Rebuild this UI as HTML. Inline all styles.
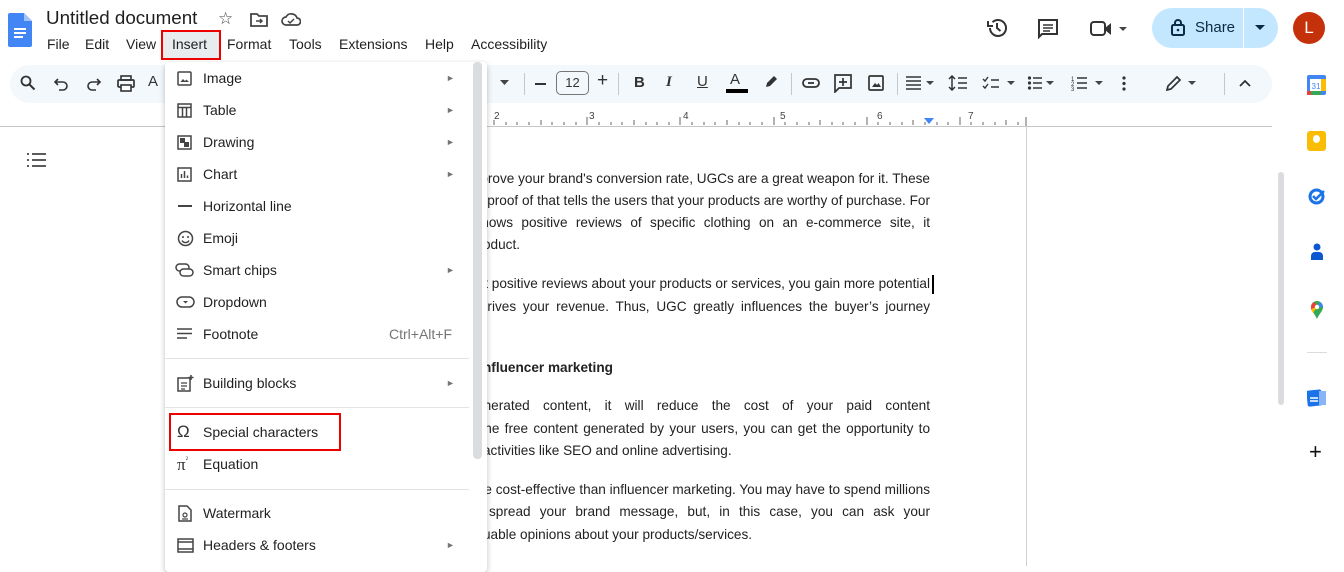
<!DOCTYPE html>
<html><head><meta charset="utf-8"><style>
*{margin:0;padding:0;box-sizing:border-box}
body{width:1344px;height:566px;overflow:hidden;background:#fff;font-family:"Liberation Sans",sans-serif;color:#1f1f1f;position:relative}
.a{position:absolute;white-space:nowrap}
.tb{position:absolute;left:10px;top:65px;width:1262px;height:38px;background:#f3f8fc;border-radius:19px}
.ln{position:absolute;font-size:13.6px;color:#222;white-space:nowrap;right:414px;text-align:right}
.ll{position:absolute;font-size:13.6px;color:#222;white-space:nowrap;left:483px}
.mi{position:absolute;left:203px;font-size:14px;color:#1f1f1f}
.ar{position:absolute;left:446px;font-size:9px;color:#777}
.ic{position:absolute;left:177px}
</style></head><body>
<svg class="a" style="left:8px;top:13px" width="24" height="34" viewBox="0 0 24 34"><path d="M2 0h14l8 8v24a2 2 0 0 1-2 2H2a2 2 0 0 1-2-2V2a2 2 0 0 1 2-2z" fill="#4285f4"/><path d="M16 0l8 8h-8z" fill="#a1c2fa"/><rect x="6" y="15" width="12" height="2" fill="#fff"/><rect x="6" y="19" width="12" height="2" fill="#fff"/><rect x="6" y="23" width="9" height="2" fill="#fff"/></svg>
<div class="a" style="left:46px;top:7px;font-size:18.8px;color:#1f1f1f">Untitled document</div>
<div class="a" style="left:218px;top:9px;font-size:17px;color:#444">☆</div>
<svg class="a" style="left:250px;top:12px" width="18" height="15"><path d="M1 2h6l2 2h8v10H1z" fill="none" stroke="#444" stroke-width="1.8"/><path d="M6 9h6M10 7l2 2-2 2" stroke="#444" stroke-width="1.5" fill="none"/></svg>
<svg class="a" style="left:281px;top:12px" width="20" height="14"><path d="M5 13a4 4 0 0 1 0-8 6 6 0 0 1 11 1 3.5 3.5 0 0 1 0 7z" fill="none" stroke="#444" stroke-width="1.7"/><path d="M7 9l2 2 4-4" stroke="#444" stroke-width="1.5" fill="none"/></svg>
<div class="a" style="top:36px;left:47px;font-size:14px">File</div>
<div class="a" style="top:36px;left:85px;font-size:14px">Edit</div>
<div class="a" style="top:36px;left:126px;font-size:14px">View</div>
<div class="a" style="top:30px;left:161px;width:60px;height:30px;border:2px solid #e00;background:#e9ecef"></div>
<div class="a" style="top:36px;left:172px;font-size:14px">Insert</div>
<div class="a" style="top:36px;left:227px;font-size:14px">Format</div>
<div class="a" style="top:36px;left:289px;font-size:14px">Tools</div>
<div class="a" style="top:36px;left:339px;font-size:14px">Extensions</div>
<div class="a" style="top:36px;left:425px;font-size:14px">Help</div>
<div class="a" style="top:36px;left:471px;font-size:14px">Accessibility</div>
<svg class="a" style="left:986px;top:17px" width="22" height="22" viewBox="0 0 22 22"><path d="M4 11a8 8 0 1 0 2.5-5.8" fill="none" stroke="#333" stroke-width="2"/><path d="M2 4v5h5" fill="none" stroke="#333" stroke-width="2"/><path d="M11 6v5l3.5 3" fill="none" stroke="#333" stroke-width="2"/></svg>
<svg class="a" style="left:1037px;top:18px" width="22" height="22"><path d="M2 2h18v14h-15l-3 3z" fill="none" stroke="#333" stroke-width="2"/><path d="M6 7h10M6 10h10M6 13h7" stroke="#333" stroke-width="1.6"/></svg>
<svg class="a" style="left:1090px;top:20px" width="40" height="18"><rect x="1" y="2" width="14" height="13" rx="3" fill="none" stroke="#333" stroke-width="2"/><path d="M15 8l6-5v12l-6-5z" fill="#333"/><path d="M29 7h8l-4 4z" fill="#444"/></svg>
<div class="a" style="left:1152px;top:8px;width:126px;height:40px;border-radius:20px;background:#c2e7ff"></div>
<div class="a" style="left:1243px;top:8px;width:1px;height:40px;background:#fff"></div>
<svg class="a" style="left:1171px;top:18px" width="14" height="18"><rect x="1" y="7" width="12" height="10" rx="1.5" fill="none" stroke="#0b2a44" stroke-width="2"/><path d="M4 7V5a3 3 0 0 1 6 0v2" fill="none" stroke="#0b2a44" stroke-width="2"/><circle cx="7" cy="12" r="1.3" fill="#0b2a44"/></svg>
<div class="a" style="left:1195px;top:19px;font-size:15px;color:#0b2a44">Share</div>
<svg class="a" style="left:1255px;top:25px" width="10" height="6"><path d="M0 0h10L5 5z" fill="#0b2a44"/></svg>
<div class="a" style="left:1293px;top:12px;width:32px;height:32px;border-radius:50%;background:#c5310b;color:#fff;font-size:17px;text-align:center;line-height:32px">L</div>
<div class="tb"></div>
<svg class="a" style="left:20px;top:75px" width="16" height="16"><circle cx="6" cy="6" r="4.5" fill="none" stroke="#333" stroke-width="1.8"/><path d="M9.5 9.5l5 5" stroke="#333" stroke-width="2"/></svg>
<svg class="a" style="left:54px;top:77px" width="16" height="14"><path d="M4 2L1 5l3 3" fill="none" stroke="#333" stroke-width="1.6"/><path d="M1 5h8a4 4 0 0 1 0 8H5" fill="none" stroke="#333" stroke-width="1.6"/></svg>
<svg class="a" style="left:85px;top:77px" width="16" height="14"><path d="M12 2l3 3-3 3" fill="none" stroke="#333" stroke-width="1.6"/><path d="M15 5H7a4 4 0 0 0 0 8h4" fill="none" stroke="#333" stroke-width="1.6"/></svg>
<svg class="a" style="left:117px;top:75px" width="18" height="17"><rect x="4" y="1" width="10" height="4" fill="none" stroke="#333" stroke-width="1.6"/><rect x="1" y="5" width="16" height="7" rx="1" fill="none" stroke="#333" stroke-width="1.7"/><rect x="4" y="10" width="10" height="6" fill="#fff" stroke="#333" stroke-width="1.6"/></svg>
<div class="a" style="left:148px;top:73px;font-size:15px;color:#333">A</div>
<svg class="a" style="left:500px;top:80px" width="10" height="6"><path d="M0 0h9L4.5 5z" fill="#444"/></svg>
<div class="a" style="left:524px;top:73px;width:1px;height:22px;background:#c7c7c7"></div>
<div class="a" style="left:535px;top:83px;width:11px;height:2px;background:#333"></div>
<div class="a" style="left:556px;top:71px;width:33px;height:24px;border:1px solid #747775;border-radius:5px;font-size:13px;text-align:center;line-height:22px;color:#333">12</div>
<div class="a" style="left:597px;top:70px;font-size:19px;color:#333">+</div>
<div class="a" style="left:618px;top:73px;width:1px;height:22px;background:#c7c7c7"></div>
<div class="a" style="left:634px;top:74px;font-size:15px;font-weight:bold;color:#333">B</div>
<div class="a" style="left:666px;top:74px;font-size:15px;font-style:italic;color:#333;font-family:'Liberation Serif',serif;font-weight:bold">I</div>
<div class="a" style="left:697px;top:73px;font-size:15px;text-decoration:underline;color:#333">U</div>
<div class="a" style="left:730px;top:71px;font-size:15px;color:#333">A</div>
<div class="a" style="left:726px;top:89px;width:22px;height:4px;background:#000"></div>
<svg class="a" style="left:763px;top:74px" width="16" height="16"><path d="M3 13l1-4 7-7 3 3-7 7z" fill="#333"/></svg>
<div class="a" style="left:791px;top:73px;width:1px;height:22px;background:#c7c7c7"></div>
<svg class="a" style="left:802px;top:78px" width="18" height="10"><rect x="1" y="1" width="16" height="8" rx="4" fill="none" stroke="#333" stroke-width="1.8"/><path d="M6 5h6" stroke="#333" stroke-width="1.8"/></svg>
<svg class="a" style="left:834px;top:74px" width="18" height="19"><path d="M1 1h16v13H5l-4 4z" fill="none" stroke="#333" stroke-width="1.7"/><path d="M9 4v8M5 8h8" stroke="#333" stroke-width="1.7"/></svg>
<svg class="a" style="left:868px;top:75px" width="16" height="16"><rect x="1" y="1" width="14" height="14" rx="1" fill="none" stroke="#333" stroke-width="1.7"/><path d="M4 12l3-4 2 2 1.5-2 2.5 4z" fill="#333"/></svg>
<div class="a" style="left:897px;top:73px;width:1px;height:22px;background:#c7c7c7"></div>
<svg class="a" style="left:906px;top:76px" width="32" height="14"><path d="M0 1h15M0 5h15M0 9h15M0 13h15" stroke="#333" stroke-width="1.6"/><path d="M20 5h8l-4 4z" fill="#444"/></svg>
<svg class="a" style="left:948px;top:75px" width="20" height="16"><path d="M4 1v14M1 4l3-3 3 3M1 12l3 3 3-3" fill="none" stroke="#333" stroke-width="1.5"/><path d="M10 3h9M10 8h9M10 13h9" stroke="#333" stroke-width="1.6"/></svg>
<svg class="a" style="left:982px;top:75px" width="36" height="16"><path d="M1 4l2 2 3-4M1 11l2 2 3-4" fill="none" stroke="#333" stroke-width="1.4"/><path d="M9 5h8M9 12h8" stroke="#333" stroke-width="1.6"/><path d="M25 6h8l-4 4z" fill="#444"/></svg>
<svg class="a" style="left:1027px;top:75px" width="28" height="16"><circle cx="2.5" cy="3" r="1.6" fill="#333"/><circle cx="2.5" cy="8" r="1.6" fill="#333"/><circle cx="2.5" cy="13" r="1.6" fill="#333"/><path d="M6 3h9M6 8h9M6 13h9" stroke="#333" stroke-width="1.6"/><path d="M19 6h8l-4 4z" fill="#444"/></svg>
<svg class="a" style="left:1071px;top:75px" width="36" height="16"><text x="0" y="6" font-size="6" fill="#333" font-family="Liberation Sans">1</text><text x="0" y="11" font-size="6" fill="#333" font-family="Liberation Sans">2</text><text x="0" y="16" font-size="6" fill="#333" font-family="Liberation Sans">3</text><path d="M6 3h10M6 8h10M6 13h10" stroke="#333" stroke-width="1.6"/><path d="M24 6h8l-4 4z" fill="#444"/></svg>
<svg class="a" style="left:1122px;top:76px" width="4" height="15"><circle cx="2" cy="2" r="1.6" fill="#333"/><circle cx="2" cy="7.5" r="1.6" fill="#333"/><circle cx="2" cy="13" r="1.6" fill="#333"/></svg>
<svg class="a" style="left:1165px;top:74px" width="36" height="18"><path d="M2 16l1-4 9-9 3 3-9 9z" fill="none" stroke="#333" stroke-width="1.7"/><path d="M23 7h8l-4 4z" fill="#444"/></svg>
<div class="a" style="left:1224px;top:73px;width:1px;height:22px;background:#c7c7c7"></div>
<svg class="a" style="left:1239px;top:79px" width="12" height="8"><path d="M1 7l5-5 5 5" fill="none" stroke="#333" stroke-width="1.8"/></svg>
<div class="a" style="left:0;top:126px;width:1272px;height:1px;background:#c4c7c5"></div>
<div class="a" style="left:1026px;top:126px;width:1px;height:440px;background:#d0d0d0"></div>
<svg class="a" style="left:480px;top:108px" width="560" height="20">
<g stroke="#666" stroke-width="1">
<path d="M14 12v5M26 14v3M37 14v3M49 14v3M61 12v5M72 14v3M84 14v3M96 14v3M107 9v8M119 14v3M131 14v3M142 14v3M154 12v5M166 14v3M177 14v3M189 14v3M200 9v8M212 14v3M224 14v3M235 14v3M247 12v5M259 14v3M270 14v3M282 14v3M294 9v8M305 14v3M317 14v3M329 14v3M340 12v5M352 14v3M363 14v3M375 14v3M387 9v8M398 14v3M410 14v3M422 14v3M433 12v5M445 14v3M457 14v3M468 14v3M480 9v8M491 14v3M503 14v3M515 14v3M526 12v5M538 14v3M546 9v9"/>
</g>
<g font-size="10" fill="#444" font-family="Liberation Sans"><text x="14" y="11">2</text><text x="109" y="11">3</text><text x="203" y="11">4</text><text x="300" y="11">5</text><text x="397" y="11">6</text><text x="488" y="11">7</text></g>
<path d="M444 10h10l-5 6z" fill="#4285f4"/>
</svg>
<svg class="a" style="left:27px;top:153px" width="20" height="14"><path d="M0 1h2M5 1h14M0 7h2M5 7h14M0 13h2M5 13h14" stroke="#444" stroke-width="1.8"/></svg>
<div class="ln" style="top:171px">to improve your brand's conversion rate, UGCs are a great weapon for it. These</div>
<div class="ln" style="top:193px">social proof of that tells the users that your products are worthy of purchase. For</div>
<div class="ln" style="top:215px;word-spacing:4.6px">someone shows positive reviews of specific clothing on an e-commerce site, it</div>
<div class="ll" style="top:237px">oduct.</div>
<div class="ln" style="top:276px">you get positive reviews about your products or services, you gain more potential</div>
<div class="a" style="left:932px;top:275px;width:2px;height:19px;background:#000"></div>
<div class="ln" style="top:299px;word-spacing:3px">and this drives your revenue. Thus, UGC greatly influences the buyer’s journey</div>
<div class="ll" style="top:360px;font-weight:bold;left:483px">nfluencer marketing</div>
<div class="ln" style="top:398px;word-spacing:9.5px">user-generated content, it will reduce the cost of your paid content</div>
<div class="ln" style="top:421px;word-spacing:1.5px">with the free content generated by your users, you can get the opportunity to</div>
<div class="ll" style="top:443px">activities like SEO and online advertising.</div>
<div class="ln" style="top:482px">UGC is more cost-effective than influencer marketing. You may have to spend millions</div>
<div class="ln" style="top:504px;word-spacing:5.4px">influencers to spread your brand message, but, in this case, you can ask your</div>
<div class="ll" style="top:527px">uable opinions about your products/services.</div>
<div class="a" style="left:1278px;top:172px;width:6px;height:233px;border-radius:3px;background:#dadce0"></div>
<svg class="a" style="left:1307px;top:75px" width="19" height="20"><rect x="0" y="0" width="19" height="20" rx="2" fill="#4285f4"/><rect x="3" y="4" width="13" height="12" fill="#fff"/><rect x="14" y="4" width="5" height="12" fill="#fbbc04"/><rect x="0" y="16" width="14" height="4" fill="#34a853"/><rect x="0" y="16" width="4" height="4" fill="#ea4335"/><text x="4.5" y="14" font-size="8" fill="#4285f4" font-family="Liberation Sans">31</text></svg>
<div class="a" style="left:1307px;top:131px;width:19px;height:20px;border-radius:3px;background:#fbbc04"></div>
<div class="a" style="left:1313px;top:135px;width:7px;height:8px;border-radius:50%;background:#fff"></div>
<svg class="a" style="left:1308px;top:187px" width="18" height="18"><circle cx="8.5" cy="9.5" r="6.5" fill="none" stroke="#1a73e8" stroke-width="3"/><path d="M5 9l3 3 8-8" fill="none" stroke="#1a73e8" stroke-width="2.5"/></svg>
<svg class="a" style="left:1310px;top:243px" width="14" height="18"><circle cx="7" cy="4" r="3.5" fill="#0b57d0"/><path d="M1 17v-4a4 4 0 0 1 4-4h4a4 4 0 0 1 4 4v4z" fill="#0b57d0"/></svg>
<svg class="a" style="left:1310px;top:300px" width="14" height="19"><path d="M7 19C5 14 1 11 1 7a6 6 0 0 1 12 0c0 4-4 7-6 12z" fill="#34a853"/><path d="M1 7a6 6 0 0 1 3-5l5 5-8 3z" fill="#ea4335"/><path d="M13 7a6 6 0 0 0-3-5L7 7z" fill="#4285f4"/><path d="M1 9l6-2-4 6z" fill="#fbbc04"/><circle cx="7" cy="7" r="2.2" fill="#fff"/></svg>
<div class="a" style="left:1307px;top:352px;width:20px;height:1px;background:#dadce0"></div>
<svg class="a" style="left:1307px;top:388px" width="20" height="20"><rect x="0" y="2" width="15" height="16" rx="2" fill="#1a73e8" transform="rotate(-6 8 10)"/><rect x="12" y="3" width="7" height="14" fill="#8ab4f8"/><path d="M3 10h8M3 13h8" stroke="#fff" stroke-width="1.5"/></svg>
<div class="a" style="left:1309px;top:441px;font-size:22px;color:#111;line-height:22px">+</div>
<div class="a" style="left:165px;top:62px;width:322px;height:510px;background:#fff;box-shadow:0 2px 6px rgba(0,0,0,.25);border-radius:4px"></div>
<div class="a" style="left:473px;top:62px;width:9px;height:397px;border-radius:4px;background:#dadce0"></div>
<div class="a" style="left:165px;top:358px;width:304px;height:1px;background:#e3e3e3"></div>
<div class="a" style="left:165px;top:407px;width:304px;height:1px;background:#e3e3e3"></div>
<div class="a" style="left:165px;top:489px;width:304px;height:1px;background:#e3e3e3"></div>
<svg class="ic" style="top:71px" width="16" height="16"><rect x="1" y="1" width="13" height="13" rx="1" fill="none" stroke="#444" stroke-width="1.5"/><path d="M3.5 11l2.5-3 2 2 1.5-1.5 2.5 2.5z" fill="#444"/></svg>
<svg class="ic" style="top:103px" width="16" height="16"><rect x="1" y="1" width="13" height="13" fill="none" stroke="#444" stroke-width="1.5"/><path d="M1 4.5h13M5.5 4.5v9.5M9.5 4.5v9.5" stroke="#444" stroke-width="1.5"/></svg>
<svg class="ic" style="top:135px" width="16" height="16"><rect x="1" y="1" width="13" height="13" fill="none" stroke="#444" stroke-width="1.5"/><rect x="3" y="3" width="5" height="5" fill="#444"/><rect x="7" y="7" width="5" height="5" fill="#444"/></svg>
<svg class="ic" style="top:167px" width="16" height="16"><rect x="1" y="1" width="13" height="13" fill="none" stroke="#444" stroke-width="1.5"/><path d="M4.5 11V7M7.5 11V4M10.5 11V8.5" stroke="#444" stroke-width="1.5"/></svg>
<div class="a" style="left:178px;top:205px;width:14px;height:2px;background:#444"></div>
<svg class="ic" style="top:230px" width="17" height="17"><circle cx="8.5" cy="8.5" r="7" fill="none" stroke="#444" stroke-width="1.5"/><circle cx="6" cy="7" r="1" fill="#444"/><circle cx="11" cy="7" r="1" fill="#444"/><path d="M5 10.5a4 4 0 0 0 7 0" fill="none" stroke="#444" stroke-width="1.4"/></svg>
<svg class="ic" style="top:263px;left:175px" width="20" height="16"><rect x="1" y="1" width="13" height="7" rx="3.5" fill="none" stroke="#444" stroke-width="1.5"/><rect x="5" y="6" width="13" height="7" rx="3.5" fill="#fff" stroke="#444" stroke-width="1.5"/></svg>
<svg class="ic" style="top:296px;left:176px" width="20" height="12"><rect x="1" y="1" width="17" height="10" rx="5" fill="none" stroke="#444" stroke-width="1.5"/><path d="M7 5h5l-2.5 2.5z" fill="#444"/></svg>
<svg class="ic" style="top:328px" width="16" height="12"><path d="M0 1h15M0 5.5h15M0 10h10" stroke="#444" stroke-width="1.6"/></svg>
<svg class="ic" style="top:375px" width="17" height="17"><rect x="1" y="3" width="12" height="13" fill="none" stroke="#444" stroke-width="1.5"/><path d="M4 8h6M4 11h6M4 14h4" stroke="#444" stroke-width="1.3"/><path d="M14 0v5M11.5 2.5h5" stroke="#444" stroke-width="1.5"/></svg>
<div class="a" style="left:177px;top:422px;font-size:17px;color:#333">Ω</div>
<div class="a" style="left:177px;top:455px;font-size:17px;color:#333;font-family:'Liberation Serif',serif">π<span style="font-size:8px;vertical-align:8px">²</span></div>
<svg class="ic" style="top:505px;left:178px" width="14" height="17"><path d="M1 1h8l4 4v11H1z" fill="none" stroke="#444" stroke-width="1.5"/><circle cx="7" cy="10" r="2" fill="none" stroke="#444" stroke-width="1.2"/><path d="M4 14h6" stroke="#444" stroke-width="1.2"/></svg>
<svg class="ic" style="top:538px" width="17" height="15"><rect x="1" y="1" width="15" height="13" fill="none" stroke="#444" stroke-width="1.5"/><path d="M1 4h15M1 11h15" stroke="#444" stroke-width="1.5"/></svg>
<div class="mi" style="top:70px">Image</div><div class="ar" style="top:73px">►</div>
<div class="mi" style="top:102px">Table</div><div class="ar" style="top:105px">►</div>
<div class="mi" style="top:134px">Drawing</div><div class="ar" style="top:137px">►</div>
<div class="mi" style="top:166px">Chart</div><div class="ar" style="top:169px">►</div>
<div class="mi" style="top:198px">Horizontal line</div>
<div class="mi" style="top:230px">Emoji</div>
<div class="mi" style="top:262px">Smart chips</div><div class="ar" style="top:265px">►</div>
<div class="mi" style="top:294px">Dropdown</div>
<div class="mi" style="top:326px">Footnote</div>
<div class="a" style="left:389px;top:326px;font-size:14px;color:#757575">Ctrl+Alt+F</div>
<div class="mi" style="top:375px">Building blocks</div><div class="ar" style="top:378px">►</div>
<div class="a" style="left:169px;top:413px;width:172px;height:38px;border:2px solid #e00"></div>
<div class="mi" style="top:424px">Special characters</div>
<div class="mi" style="top:456px">Equation</div>
<div class="mi" style="top:505px">Watermark</div>
<div class="mi" style="top:537px">Headers &amp; footers</div><div class="ar" style="top:540px">►</div>
</body></html>
